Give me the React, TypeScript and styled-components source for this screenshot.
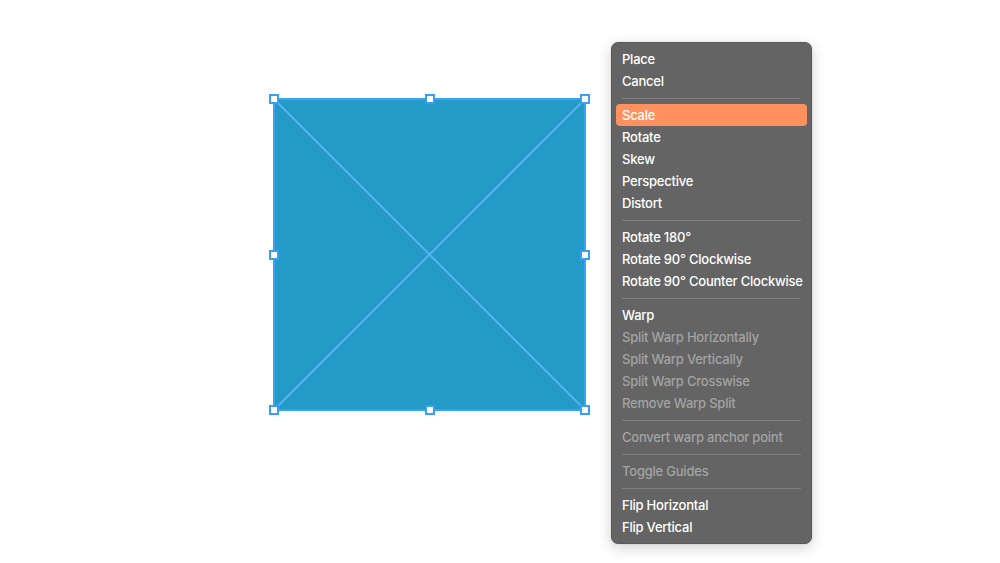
import React from "react";
import styled, { createGlobalStyle } from "styled-components";

const GlobalStyle = createGlobalStyle`
  html, body {
    margin: 0;
    padding: 0;
    background: #ffffff;
  }
  body {
    font-family: Inter, "Noto Sans", "Liberation Sans", sans-serif;
  }
`;

type Entry =
  | { kind: "item"; label: string; disabled?: boolean; active?: boolean }
  | { kind: "sep" };

const entries: Entry[] = [
  { kind: "item", label: "Place" },
  { kind: "item", label: "Cancel" },
  { kind: "sep" },
  { kind: "item", label: "Scale", active: true },
  { kind: "item", label: "Rotate" },
  { kind: "item", label: "Skew" },
  { kind: "item", label: "Perspective" },
  { kind: "item", label: "Distort" },
  { kind: "sep" },
  { kind: "item", label: "Rotate 180°" },
  { kind: "item", label: "Rotate 90° Clockwise" },
  { kind: "item", label: "Rotate 90° Counter Clockwise" },
  { kind: "sep" },
  { kind: "item", label: "Warp" },
  { kind: "item", label: "Split Warp Horizontally", disabled: true },
  { kind: "item", label: "Split Warp Vertically", disabled: true },
  { kind: "item", label: "Split Warp Crosswise", disabled: true },
  { kind: "item", label: "Remove Warp Split", disabled: true },
  { kind: "sep" },
  { kind: "item", label: "Convert warp anchor point", disabled: true },
  { kind: "sep" },
  { kind: "item", label: "Toggle Guides", disabled: true },
  { kind: "sep" },
  { kind: "item", label: "Flip Horizontal" },
  { kind: "item", label: "Flip Vertical" },
];

// handle positions as % of the bounding box
const handles: [number, number][] = [
  [0, 0],
  [50, 0],
  [100, 0],
  [0, 50],
  [100, 50],
  [0, 100],
  [50, 100],
  [100, 100],
];

export default function App() {
  return (
    <>
      <GlobalStyle />
      <Canvas>
        <Shape>
          <Diagonals viewBox="0 0 100 100" preserveAspectRatio="none">
            <line x1="0" y1="0" x2="100" y2="100" />
            <line x1="100" y1="0" x2="0" y2="100" />
          </Diagonals>
          {handles.map(([x, y], i) => (
            <Handle key={i} style={{ left: `${x}%`, top: `${y}%` }} />
          ))}
        </Shape>
        <Menu>
          {entries.map((e, i) =>
            e.kind === "sep" ? (
              <Separator key={i} />
            ) : (
              <Item key={i} $active={e.active} $disabled={e.disabled}>
                {e.label}
              </Item>
            )
          )}
        </Menu>
      </Canvas>
    </>
  );
}

const Canvas = styled.div`
  display: flex;
  align-items: flex-start;
  gap: 26px;
  padding: 42px 0 0 274px;
  height: 563px;
  box-sizing: border-box;
`;

const Shape = styled.div`
  position: relative;
  margin-top: 57px;
  width: 311px;
  height: 311px;
  background: #249bc6;
  box-shadow: 0 0 0 1px #37a3f2, inset 0 0 0 1px #37a3f2;
`;

const Diagonals = styled.svg`
  position: absolute;
  inset: 0;
  width: 100%;
  height: 100%;

  line {
    stroke: #55b2f2;
    stroke-width: 2px;
    vector-effect: non-scaling-stroke;
  }
`;

const Handle = styled.div`
  position: absolute;
  width: 10px;
  height: 10px;
  box-sizing: border-box;
  transform: translate(-50%, -50%);
  background: #ffffff;
  border: 2px solid #3a9ff2;
`;

const Menu = styled.div`
  width: 201px;
  box-sizing: border-box;
  padding: 5px 4px 5px;
  background: #646464;
  border: 1px solid #5a5a5a;
  border-radius: 7px;
  box-shadow: 0 0 0 1px rgba(0, 0, 0, 0.04), 0 4px 14px rgba(0, 0, 0, 0.18);
`;

const Item = styled.div<{ $active?: boolean; $disabled?: boolean }>`
  height: 22px;
  line-height: 22px;
  padding: 0 6px;
  border-radius: 4px;
  font-size: 13px;
  font-weight: 500;
  letter-spacing: -0.22px;
  white-space: nowrap;
  color: ${(p) => (p.$disabled ? "#a3a3a3" : "#ffffff")};
  background: ${(p) => (p.$active ? "#ff915e" : "transparent")};
`;

const Separator = styled.div`
  height: 1px;
  margin: 5.5px 6px;
  background: #7e7e7e;
`;
